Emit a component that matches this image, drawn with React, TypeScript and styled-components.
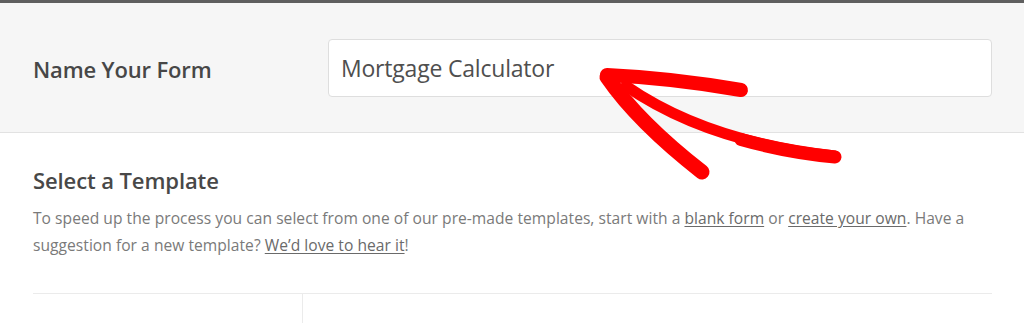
import React from "react";
import styled, { createGlobalStyle } from "styled-components";

const Global = createGlobalStyle`
  html, body { margin: 0; padding: 0; background: #ffffff; }
  body { font-family: "Open Sans", "Noto Sans", sans-serif; overflow: hidden; }
`;

const Page = styled.div`
  position: relative;
  width: 1024px;
  height: 323px;
  overflow: hidden;
  background: #fff;
`;

const TopBar = styled.div`
  height: 3px;
  background: #5f5f5f;
`;

const Header = styled.div`
  display: flex;
  align-items: center;
  height: 130px;
  box-sizing: border-box;
  padding: 0 32px 0 33px;
  background: #f6f6f6;
  border-bottom: 1px solid #e2e2e2;
`;

const Label = styled.label`
  width: 295px;
  flex: none;
  font-size: 22px;
  font-weight: 600;
  color: #474747;
  letter-spacing: -0.15px;
  margin-top: 2px;
`;

const NameInput = styled.input`
  flex: 1;
  height: 58px;
  box-sizing: border-box;
  padding: 0 12px;
  border: 1px solid #dedede;
  border-radius: 4px;
  background: #fff;
  font-family: "Open Sans", "Noto Sans", sans-serif;
  font-size: 23px;
  letter-spacing: -0.2px;
  color: #4f4f4f;
  outline: none;
`;

const Body = styled.div`
  padding: 32px 32px 0 33px;
`;

const Title = styled.h2`
  margin: 0 0 9px;
  font-size: 22px;
  font-weight: 600;
  letter-spacing: -0.1px;
  color: #484848;
  line-height: 30px;
`;

const Intro = styled.p`
  margin: 0;
  padding-top: 1px;
  font-size: 15.6px;
  letter-spacing: 0.03px;
  line-height: 27px;
  color: #7a7a7a;
`;

const Link = styled.a`
  color: #6a6a6a;
  text-decoration: underline;
  text-underline-offset: 2px;
`;

const Columns = styled.div`
  display: grid;
  grid-template-columns: 270px 1fr;
  margin-top: 34px;
  border-top: 1px solid #ebebeb;
  height: 40px;
`;

const Sidebar = styled.div`
  border-right: 1px solid #ebebeb;
`;

const Arrow = styled.svg`
  position: absolute;
  left: 0;
  top: 0;
  pointer-events: none;
`;

export default function App() {
  return (
    <Page>
      <Global />
      <TopBar />
      <Header>
        <Label>Name Your Form</Label>
        <NameInput defaultValue="Mortgage Calculator" />
      </Header>
      <Body>
        <Title>Select a Template</Title>
        <Intro>
          To speed up the process you can select from one of our pre-made templates, start with a{" "}
          <Link href="#">blank form</Link> or <Link href="#">create your own</Link>. Have a
          <br />
          suggestion for a new template? <Link href="#">We’d love to hear it</Link>!
        </Intro>
        <Columns>
          <Sidebar />
          <div />
        </Columns>
      </Body>
      <Arrow width="1024" height="323" viewBox="0 0 1024 323">
        <g fill="none" stroke="#ff0000" strokeLinecap="round" strokeLinejoin="round">
          <path d="M607 75 Q672 78 741 90" strokeWidth="14" />
          <path d="M607 77 Q638 122 702 172" strokeWidth="15" />
          <path d="M626 86 Q707 142 835 156" strokeWidth="11" />
          <path d="M741 139.5 Q787 152.5 835 157" strokeWidth="13" />
        </g>
      </Arrow>
    </Page>
  );
}
